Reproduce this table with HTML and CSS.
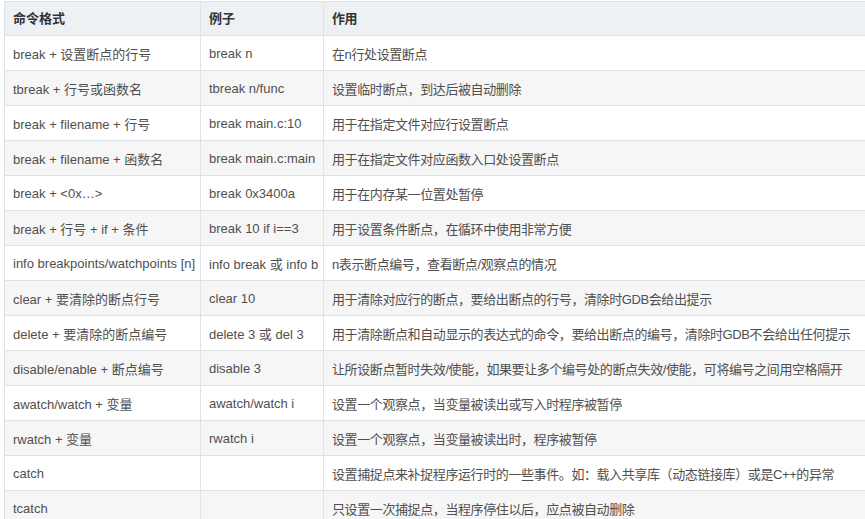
FILE: index.html
```html
<!DOCTYPE html>
<html lang="zh">
<head>
<meta charset="utf-8">
<link rel="stylesheet" href="styles.css">
</head>
<body>
<div class="wrap">
<table class="cmd-table">
  <colgroup><col class="c1"><col class="c2"><col class="c3"></colgroup>
  <thead>
    <tr><th>命令格式</th><th>例子</th><th class="desc">作用</th></tr>
  </thead>
  <tbody>
    <tr><td>break + 设置断点的行号</td><td>break n</td><td class="desc">在n行处设置断点</td></tr>
    <tr><td>tbreak + 行号或函数名</td><td>tbreak n/func</td><td class="desc">设置临时断点，到达后被自动删除</td></tr>
    <tr><td>break + filename + 行号</td><td>break main.c:10</td><td class="desc">用于在指定文件对应行设置断点</td></tr>
    <tr><td>break + filename + 函数名</td><td>break main.c:main</td><td class="desc">用于在指定文件对应函数入口处设置断点</td></tr>
    <tr><td>break + &lt;0x…&gt;</td><td>break 0x3400a</td><td class="desc">用于在内存某一位置处暂停</td></tr>
    <tr><td>break + 行号 + if + 条件</td><td>break 10 if i==3</td><td class="desc">用于设置条件断点，在循环中使用非常方便</td></tr>
    <tr><td>info breakpoints/watchpoints [n]</td><td>info break 或 info b</td><td class="desc">n表示断点编号，查看断点/观察点的情况</td></tr>
    <tr><td>clear + 要清除的断点行号</td><td>clear 10</td><td class="desc">用于清除对应行的断点，要给出断点的行号，清除时GDB会给出提示</td></tr>
    <tr><td>delete + 要清除的断点编号</td><td>delete 3 或 del 3</td><td class="desc">用于清除断点和自动显示的表达式的命令，要给出断点的编号，清除时GDB不会给出任何提示</td></tr>
    <tr><td>disable/enable + 断点编号</td><td>disable 3</td><td class="desc">让所设断点暂时失效/使能，如果要让多个编号处的断点失效/使能，可将编号之间用空格隔开</td></tr>
    <tr><td>awatch/watch + 变量</td><td>awatch/watch i</td><td class="desc">设置一个观察点，当变量被读出或写入时程序被暂停</td></tr>
    <tr><td>rwatch + 变量</td><td>rwatch i</td><td class="desc">设置一个观察点，当变量被读出时，程序被暂停</td></tr>
    <tr><td>catch</td><td></td><td class="desc">设置捕捉点来补捉程序运行时的一些事件。如：载入共享库（动态链接库）或是C++的异常</td></tr>
    <tr><td>tcatch</td><td></td><td class="desc">只设置一次捕捉点，当程序停住以后，应点被自动删除</td></tr>
  </tbody>
</table>
</div>
</body>
</html>
```
FILE: styles.css
```css
html, body {
  margin: 0;
  padding: 0;
  background: #ffffff;
  overflow: hidden;
}
.wrap {
  padding: 1px 0 0 4px;
  width: 960px;
}
.cmd-table {
  border-collapse: collapse;
  table-layout: fixed;
  width: 960px;
  font-family: "Liberation Sans", "Noto Sans CJK SC", sans-serif;
  font-size: 13px;
  letter-spacing: 0;
  color: #4f4f4f;
}
.c1 { width: 196px; }
.c2 { width: 123px; }
.c3 { width: 641px; }
.cmd-table th,
.cmd-table td {
  border: 1px solid #e0e3e6;
  height: 35px;
  padding: 0 8px;
  text-align: left;
  vertical-align: middle;
  white-space: nowrap;
  box-sizing: border-box;
}
.cmd-table th {
  height: 34px;
  padding-bottom: 2px;
  background: #edf1f4;
  font-weight: bold;
  color: #333333;
}
.cmd-table .desc {
  letter-spacing: -0.4px;
}
.cmd-table tbody tr:nth-child(even) td {
  background: #f6f6f6;
}
.cmd-table tbody tr:nth-child(odd) td {
  background: #ffffff;
}
```
